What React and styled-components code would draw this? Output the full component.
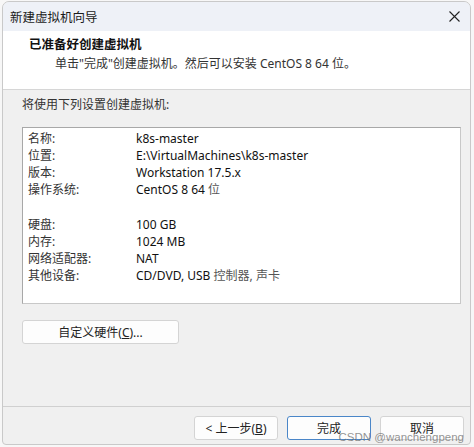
import React from 'react';
import styled, { createGlobalStyle } from 'styled-components';

const Global = createGlobalStyle`
  html, body { margin: 0; padding: 0; background: #f7f7f7; }
  body { font-family: "Noto Sans", "Noto Sans CJK SC", sans-serif; }
`;

const Page = styled.div`
  width: 474px;
  height: 447px;
  padding: 1px 3px 2px 2px;
  box-sizing: border-box;
  position: relative;
`;

const Window = styled.div`
  height: 100%;
  display: flex;
  flex-direction: column;
  border: 1px solid #c9c9c9;
  border-radius: 7px 7px 4px 4px;
  overflow: hidden;
  background: #f0f0f0;
  box-sizing: border-box;
`;

const TitleBar = styled.div`
  height: 29px;
  display: flex;
  align-items: center;
  justify-content: space-between;
  padding: 0 10px 0 7px;
  background: #eef1f7;
  font-size: 12.5px;
  color: #1a1a1a;
`;

const Header = styled.div`
  height: 59px;
  background: #fff;
  border-bottom: 1px solid #d6d6d6;
  padding: 5px 0 0 26px;
  box-sizing: border-box;
`;

const HeaderTitle = styled.div`
  font-size: 12.5px;
  font-weight: 700;
  color: #111;
  line-height: 17px;
`;

const HeaderSub = styled.div`
  font-size: 12px;
  color: #333;
  line-height: 17px;
  margin: 2px 0 0 26px;
`;

const Body = styled.div`
  flex: 1;
  padding: 6px 9px 0 19px;
  display: flex;
  flex-direction: column;
  border-bottom: 1px solid #d0d0d0;
`;

const Intro = styled.div`
  font-size: 12px;
  color: #333;
  line-height: 17px;
`;

const SummaryBox = styled.div`
  margin-top: 14px;
  height: 177px;
  background: #fff;
  border: 1px solid #a8a8a8;
  border-right-color: #c8c8c8;
  border-bottom-color: #c8c8c8;
  padding: 2px 0 0 5px;
  box-sizing: border-box;
`;

const Row = styled.div`
  display: grid;
  grid-template-columns: 108px 1fr;
  height: 17px;
  line-height: 17px;
  font-size: 12px;
  color: #111;
  margin-top: ${p => (p.gap ? '18px' : '0')};
`;

const Label = styled.span`
  color: #333;
`;

const Cjk = styled.span`
  color: #555;
`;

const Button = styled.button`
  height: 24px;
  width: ${p => p.w || '84px'};
  background: #fdfdfd;
  border: 1px solid ${p => (p.primary ? '#4a86c8' : '#d4d4d4')};
  border-radius: 3px;
  font-family: inherit;
  font-size: 12px;
  color: #222;
  padding: 0;
`;

const CustomRow = styled.div`
  margin-top: 16px;
`;

const Footer = styled.div`
  height: 37px;
  display: flex;
  justify-content: flex-end;
  align-items: flex-start;
  gap: 9px;
  padding: 9px 6px 0 0;
  box-sizing: border-box;
`;

const Watermark = styled.div`
  position: absolute;
  right: 10px;
  bottom: 4px;
  font-size: 11.5px;
  color: rgba(110, 110, 110, 0.75);
  font-family: "Liberation Sans", sans-serif;
`;

const CloseIcon = () => (
  <svg width="11" height="11" viewBox="0 0 11 11">
    <path d="M0.5 0.5 L10.5 10.5 M10.5 0.5 L0.5 10.5" stroke="#222" strokeWidth="1.1" />
  </svg>
);

const rows = [
  ['名称:', 'k8s-master'],
  ['位置:', 'E:\\VirtualMachines\\k8s-master'],
  ['版本:', 'Workstation 17.5.x'],
  ['操作系统:', <>CentOS 8 64 <Cjk>位</Cjk></>],
  ['硬盘:', '100 GB', true],
  ['内存:', '1024 MB'],
  ['网络适配器:', 'NAT'],
  ['其他设备:', <>CD/DVD, USB <Cjk>控制器, 声卡</Cjk></>],
];

export default function App() {
  return (
    <Page>
      <Global />
      <Window>
        <TitleBar>
          <span>新建虚拟机向导</span>
          <CloseIcon />
        </TitleBar>
        <Header>
          <HeaderTitle>已准备好创建虚拟机</HeaderTitle>
          <HeaderSub>单击"完成"创建虚拟机。然后可以安装 CentOS 8 64 位。</HeaderSub>
        </Header>
        <Body>
          <Intro>将使用下列设置创建虚拟机:</Intro>
          <SummaryBox>
            {rows.map(([k, v, gap]) => (
              <Row key={k} gap={gap ? 1 : 0}>
                <Label>{k}</Label>
                <span>{v}</span>
              </Row>
            ))}
          </SummaryBox>
          <CustomRow>
            <Button w="157px">自定义硬件(<u>C</u>)...</Button>
          </CustomRow>
        </Body>
        <Footer>
          <Button>&lt; 上一步(<u>B</u>)</Button>
          <Button primary>完成</Button>
          <Button>取消</Button>
        </Footer>
      </Window>
      <Watermark>CSDN @wanchengpeng</Watermark>
    </Page>
  );
}
